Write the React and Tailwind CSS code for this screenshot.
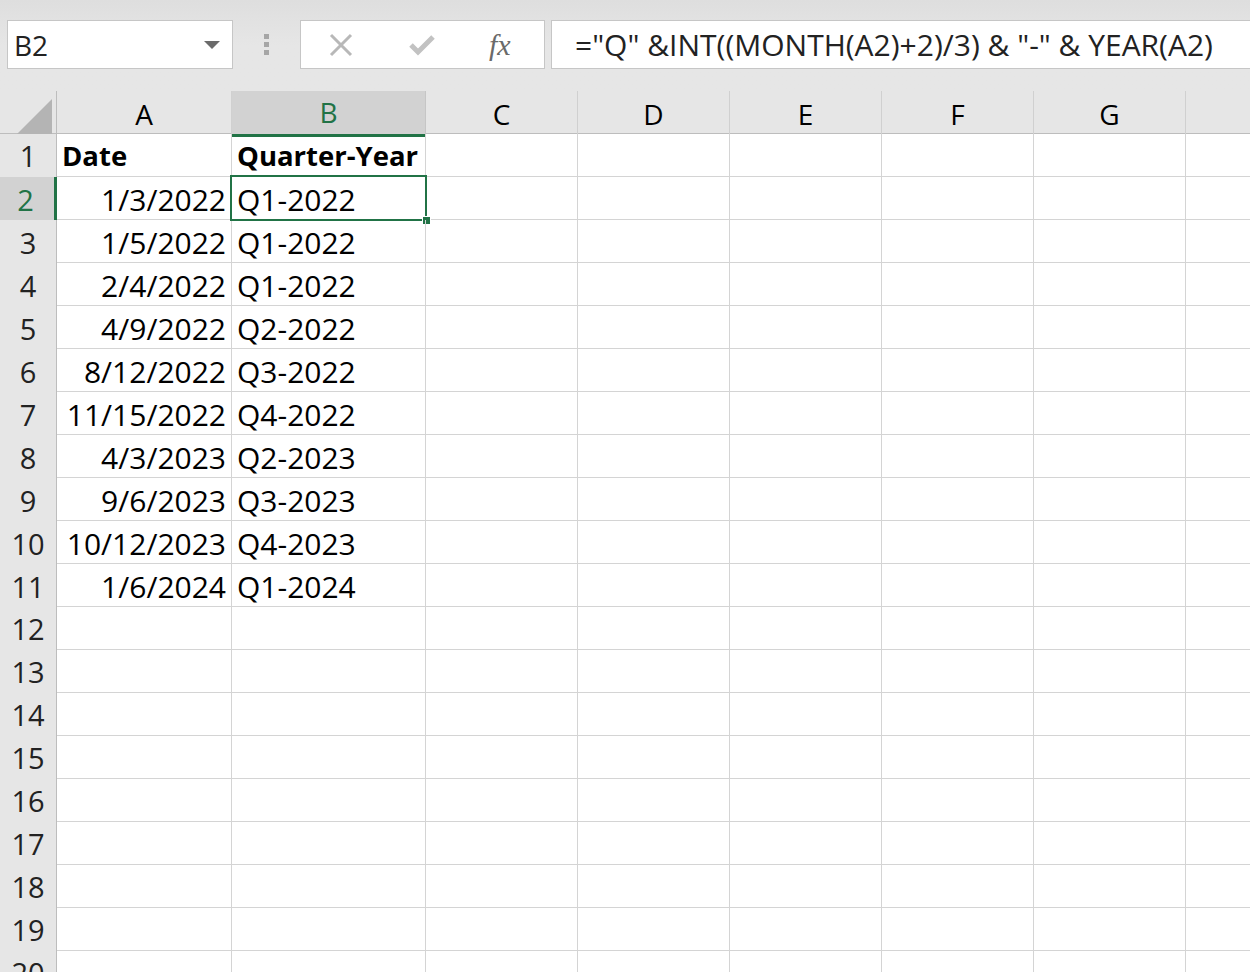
import React from "react";

const rows = [
  ["1/3/2022", "Q1-2022"],
  ["1/5/2022", "Q1-2022"],
  ["2/4/2022", "Q1-2022"],
  ["4/9/2022", "Q2-2022"],
  ["8/12/2022", "Q3-2022"],
  ["11/15/2022", "Q4-2022"],
  ["4/3/2023", "Q2-2023"],
  ["9/6/2023", "Q3-2023"],
  ["10/12/2023", "Q4-2023"],
  ["1/6/2024", "Q1-2024"],
];

const cols = ["A", "B", "C", "D", "E", "F", "G"];
const font = { fontFamily: '"Open Sans", "Liberation Sans", sans-serif' };

function FormulaBar() {
  return (
    <div className="h-[91px] bg-gradient-to-b from-[#dedede] via-[#e6e6e6] to-[#e6e6e6] flex items-start pt-[20px] pl-[7px]">
      {/* name box */}
      <div className="w-[226px] h-[49px] bg-white border border-[#c6c6c6] flex items-center justify-between pl-[6px] pr-[12px]">
        <span className="text-[28px] text-[#222]">B2</span>
        <svg width="16" height="8" viewBox="0 0 16 8">
          <path d="M0 0 H16 L8 8 Z" fill="#6b6b6b" />
        </svg>
      </div>
      {/* grip */}
      <div className="w-[67px] h-[49px] flex flex-col items-center justify-center gap-[3px]">
        <div className="w-[5px] h-[5px] bg-[#a6a6a6]" />
        <div className="w-[5px] h-[5px] bg-[#a6a6a6]" />
        <div className="w-[5px] h-[5px] bg-[#a6a6a6]" />
      </div>
      {/* cancel / enter / fx */}
      <div className="w-[245px] h-[49px] bg-white border border-[#c6c6c6] flex items-center">
        <svg className="ml-[28px]" width="24" height="24" viewBox="0 0 24 24">
          <path d="M2 2 L22 22 M22 2 L2 22" stroke="#b8b8b8" strokeWidth="3" />
        </svg>
        <svg className="ml-[56px]" width="26" height="22" viewBox="0 0 26 22">
          <path d="M2 11 L9 18 L24 3" stroke="#c2c2c2" strokeWidth="5" fill="none" />
        </svg>
        <span
          className="ml-[54px] text-[30px] italic text-[#6a6a6a] leading-none"
          style={{ fontFamily: '"Liberation Serif", serif' }}
        >
          fx
        </span>
      </div>
      {/* formula */}
      <div className="ml-[6px] flex-1 h-[49px] bg-white border border-[#c6c6c6] border-r-0 flex items-center pl-[23px]">
        <span className="text-[30px] text-[#222] whitespace-nowrap">
          ="Q" &amp;INT((MONTH(A2)+2)/3) &amp; "-" &amp; YEAR(A2)
        </span>
      </div>
    </div>
  );
}

export default function App() {
  const grid = "grid grid-cols-[57px_175px_194px_152px_152px_152px_152px_152px_1fr]";
  return (
    <div className="w-[1250px] h-[972px] overflow-hidden bg-white text-black" style={font}>
      <FormulaBar />

      {/* column headers */}
      <div className={`${grid} h-[43px] bg-[#e6e6e6] border-b border-[#bdbdbd]`}>
        <div className="border-r border-[#bdbdbd] flex items-end justify-end pr-[4px] pb-[3px]">
          <svg width="35" height="35" viewBox="0 0 35 35">
            <path d="M35 0 V35 H0 Z" fill="#b4b4b4" />
          </svg>
        </div>
        {cols.map((c) => (
          <div
            key={c}
            className={
              c === "B"
                ? "bg-[#d2d2d2] border-r border-[#c6c6c6] border-b-[3px] border-b-[#217346] flex items-center justify-center text-[28px] text-[#217346] pb-[1px]"
                : "border-r border-[#d0d0d0] flex items-center justify-center text-[28px]"
            }
          >
            {c}
          </div>
        ))}
        <div />
      </div>

      {/* rows */}
      {Array.from({ length: 20 }, (_, i) => {
        const n = i + 1;
        const data = n === 1 ? ["Date", "Quarter-Year"] : rows[n - 2] || ["", ""];
        const bold = n === 1;
        const sel = n === 2;
        return (
          <div key={n} className={`${grid} h-[43px] border-b border-[#d4d4d4]`}>
            <div
              className={
                sel
                  ? "bg-[#d2d2d2] border-r-[3px] border-[#217346] border-b border-b-[#bdbdbd] -mb-px flex items-center justify-center text-[29px] text-[#217346] pr-[3px]"
                  : "bg-[#e6e6e6] border-r border-[#bdbdbd] border-b border-b-[#c6c6c6] -mb-px flex items-center justify-center text-[29px] text-[#222]"
              }
            >
              {n}
            </div>
            <div
              className={`border-r border-[#d4d4d4] flex items-center whitespace-nowrap ${
                bold ? "font-bold justify-start pl-[5px] text-[27.5px]" : "justify-end pr-[5px] text-[30px]"
              }`}
            >
              {data[0]}
            </div>
            <div
              className={`relative border-r border-[#d4d4d4] flex items-center pl-[5px] whitespace-nowrap ${
                bold ? "font-bold text-[27.5px]" : "text-[30px]"
              }`}
            >
              {data[1]}
              {sel && (
                <div className="absolute left-[-2px] top-[-2px] w-[197px] h-[46px] border-[2px] border-[#217346]">
                  <div className="absolute right-[-6px] bottom-[-6px] w-[9px] h-[9px] bg-[#217346] border border-white" />
                </div>
              )}
            </div>
            {[0, 1, 2, 3, 4].map((k) => (
              <div key={k} className="border-r border-[#d4d4d4]" />
            ))}
            <div />
          </div>
        );
      })}
    </div>
  );
}
